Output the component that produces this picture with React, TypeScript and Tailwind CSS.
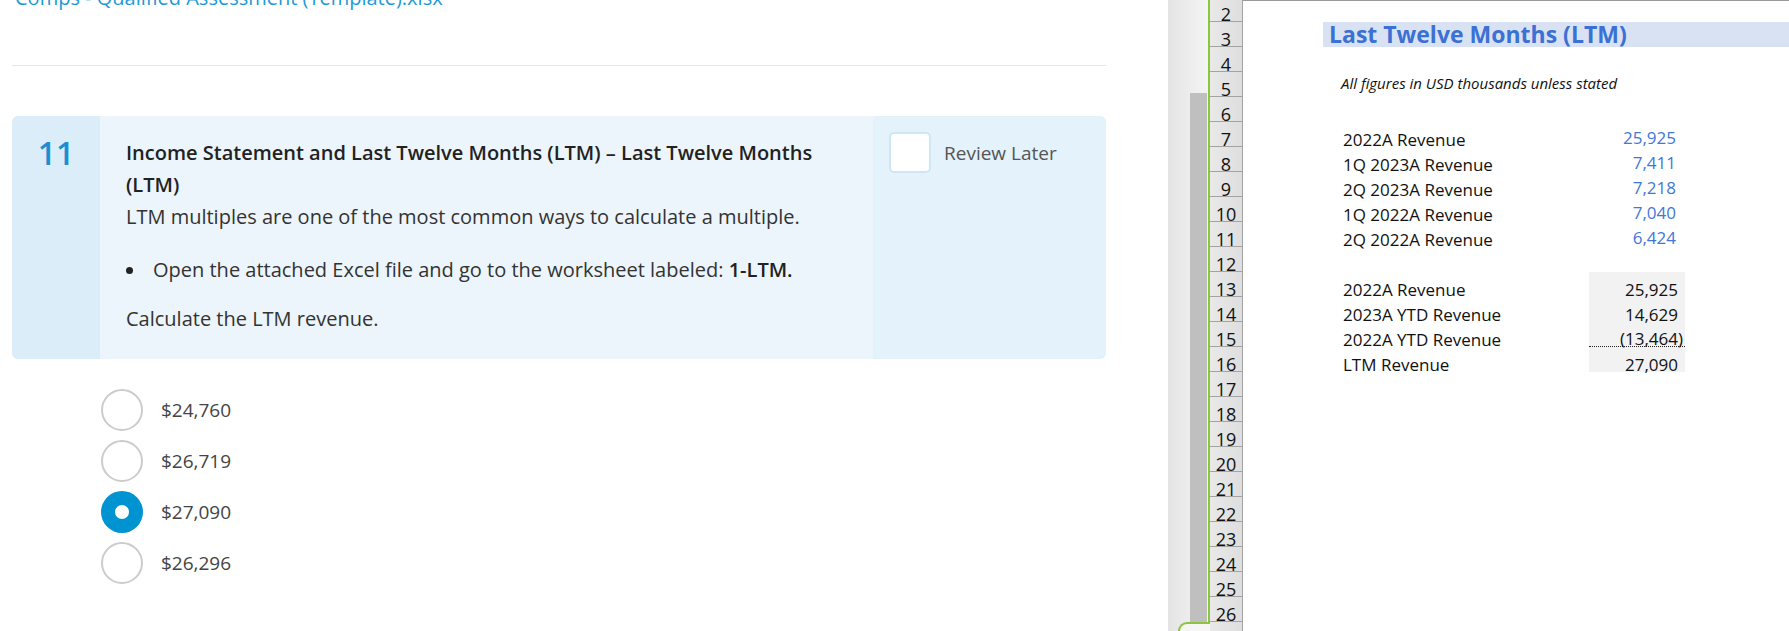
import React from "react";

const font = "font-['Open_Sans',sans-serif]";

function Radio({ label, selected }: { label: string; selected?: boolean }) {
  return (
    <div className="flex h-[42px] items-center">
      {selected ? (
        <div className="flex h-[42px] w-[42px] items-center justify-center rounded-full bg-[#0093d1]">
          <div className="h-[14px] w-[14px] rounded-full bg-white" />
        </div>
      ) : (
        <div className="h-[42px] w-[42px] rounded-full border-2 border-[#cccccc] bg-white" />
      )}
      <span className="ml-[18px] text-[19px] leading-[24px] text-[#444]">{label}</span>
    </div>
  );
}

type Row =
  | { kind: "empty" }
  | { kind: "title" }
  | { kind: "note" }
  | { kind: "blue"; label: string; value: string }
  | { kind: "box"; label: string; value: string; neg?: boolean; dotted?: boolean };

const rows: Row[] = [
  { kind: "title" }, // 3
  { kind: "empty" }, // 4
  { kind: "note" }, // 5
  { kind: "empty" }, // 6
  { kind: "blue", label: "2022A Revenue", value: "25,925" },
  { kind: "blue", label: "1Q 2023A Revenue", value: "7,411" },
  { kind: "blue", label: "2Q 2023A Revenue", value: "7,218" },
  { kind: "blue", label: "1Q 2022A Revenue", value: "7,040" },
  { kind: "blue", label: "2Q 2022A Revenue", value: "6,424" },
  { kind: "empty" }, // 12
  { kind: "box", label: "2022A Revenue", value: "25,925" },
  { kind: "box", label: "2023A YTD Revenue", value: "14,629" },
  { kind: "box", label: "2022A YTD Revenue", value: "(13,464)", neg: true, dotted: true },
  { kind: "box", label: "LTM Revenue", value: "27,090" },
];

function SheetRow({ row }: { row: Row }) {
  if (row.kind === "title") {
    return (
      <div className="flex h-[25px]">
        <div className="w-[80px] shrink-0" />
        <div className="flex-1 bg-[#d9e2f3] pl-[6px] text-[23px] font-bold leading-[25px] text-[#3b70d4]">
          Last Twelve Months (LTM)
        </div>
      </div>
    );
  }
  if (row.kind === "note") {
    return (
      <div className="flex h-[25px] items-end pb-[6px]">
        <div className="w-[98px] shrink-0" />
        <div className="text-[15px] italic leading-[16px] text-[#111]">
          All figures in USD thousands unless stated
        </div>
      </div>
    );
  }
  if (row.kind === "blue") {
    return (
      <div className="flex h-[25px] items-end text-[17px] leading-[13px]">
        <div className="w-[94px] shrink-0" />
        <div className="relative w-[252px] shrink-0 pb-[1px] pl-[6px] text-[#111]">{row.label}</div>
        <div className="relative w-[96px] shrink-0 pb-[3px] pr-[4px] text-right text-[#4178d6]">
          {row.value}
          <span className="invisible">)</span>
        </div>
      </div>
    );
  }
  if (row.kind === "box") {
    return (
      <div className="flex h-[25px] items-end text-[17px] leading-[13px]">
        <div className="w-[94px] shrink-0" />
        <div className="relative w-[252px] shrink-0 pb-[1px] pl-[6px] text-[#111]">{row.label}</div>
        <div
          className={
            "flex h-full w-[96px] shrink-0 items-end justify-end bg-[#f2f2f2] pb-[1px] pr-[2px] text-[#111] " +
            (row.dotted ? "border-b border-dotted border-[#222]" : "")
          }
        >
          <span className="relative z-10">
            {row.value}
            {row.neg ? null : <span className="invisible">)</span>}
          </span>
        </div>
      </div>
    );
  }
  return <div className="h-[25px]" />;
}

export default function App() {
  const headerNums = Array.from({ length: 24 }, (_, i) => i + 3);
  return (
    <div className={`relative flex h-[631px] w-[1789px] overflow-hidden bg-white ${font}`}>
      {/* Left question panel */}
      <div className="w-[1168px] shrink-0 pl-[12px] pr-[62px]">
        <div className="mt-[-15px] h-[26px] pl-[3px] text-[20px] leading-[26px] text-[#1b9ad6]">
          Comps - Qualified Assessment (Template).xlsx
        </div>
        <div className="mt-[54px] h-px bg-[#e6e6e6]" />
        <div className="mt-[50px] flex overflow-hidden rounded-[6px] bg-[#ecf5fb]">
          <div className="w-[88px] shrink-0 bg-[#dbedf8] pt-[21px] text-center text-[32px] font-semibold leading-[32px] text-[#1b8fd2]">
            11
          </div>
          <div className="w-[773px] shrink-0 px-[26px] pb-[24px] pt-[21px] text-[20px] leading-[32px] text-[#222]">
            <div className="font-semibold">
              Income Statement and Last Twelve Months (LTM) – Last Twelve Months (LTM)
            </div>
            <div className="text-[#333]">
              LTM multiples are one of the most common ways to calculate a multiple.
            </div>
            <ul className="mt-[21px] text-[#333]">
              <li className="flex">
                <span className="flex h-[32px] w-[27px] shrink-0 items-center">
                  <span className="h-[7px] w-[7px] rounded-full bg-[#222]" />
                </span>
                <span>
                  Open the attached Excel file and go to the worksheet labeled:{" "}
                  <span className="font-semibold text-[#222]">1-LTM.</span>
                </span>
              </li>
            </ul>
            <div className="mt-[17px] text-[#333]">Calculate the LTM revenue.</div>
          </div>
          <div className="flex flex-1 items-start bg-[#e3f2fb] pl-[16px] pt-[16px]">
            <div className="flex items-center">
              <div className="h-[41px] w-[42px] rounded-[5px] border-2 border-[#cfe7f5] bg-white" />
              <span className="ml-[13px] text-[19px] leading-[24px] text-[#555]">Review Later</span>
            </div>
          </div>
        </div>
        <div className="mt-[30px] flex flex-col gap-[9px] pl-[89px]">
          <Radio label="$24,760" />
          <Radio label="$26,719" />
          <Radio label="$27,090" selected />
          <Radio label="$26,296" />
        </div>
      </div>

      {/* Scrollbar strip */}
      <div className="w-[40px] shrink-0 bg-gradient-to-r from-[#e4e4e4] to-[#f4f4f4] pl-[22px] pt-[93px]">
        <div className="h-[529px] w-[17px] bg-[#bfbfbf]" />
      </div>
      <div className="w-[2px] shrink-0 bg-[#8cc63f]" />

      {/* Row headers */}
      <div className="w-[33px] shrink-0 border-r border-[#a3a3a3] bg-gradient-to-r from-[#e9e9e9] to-[#dedede] text-[18px] text-[#111]">
        <div className="flex h-[22px] items-end justify-center border-b border-[#a3a3a3] leading-[14px]">2</div>
        {headerNums.map((n) => (
          <div
            key={n}
            className="flex h-[25px] items-end justify-center border-b border-[#a3a3a3] leading-[14px]"
          >
            {n}
          </div>
        ))}
      </div>

      {/* Sheet */}
      <div className="flex-1 border-t border-[#9a9a9a]">
        <div className="h-[21px]" />
        {rows.map((r, i) => (
          <SheetRow key={i} row={r} />
        ))}
      </div>

      {/* Sheet tab corner */}
      <div className="absolute left-[1178px] top-[622px] h-[20px] w-[32px] rounded-tl-[9px] border-l-2 border-t-2 border-[#8cc63f] bg-[#f6f6f6]" />
    </div>
  );
}
